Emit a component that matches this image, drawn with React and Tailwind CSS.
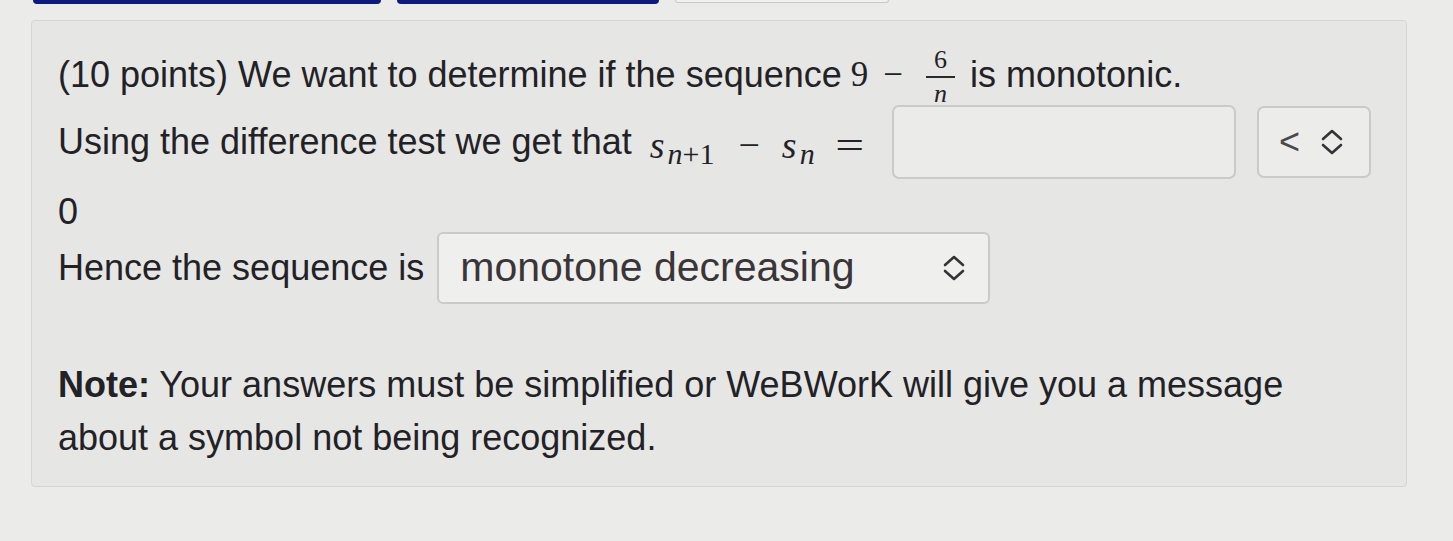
function UpDown({ className }) {
  return (
    <svg viewBox="0 0 24 28" className={className} fill="none" stroke="currentColor" strokeWidth="2.6" strokeLinecap="round" strokeLinejoin="round">
      <path d="M3 11 L12 3 L21 11" />
      <path d="M3 17 L12 25 L21 17" />
    </svg>
  );
}

function Frac({ top, bottom }) {
  return (
    <span className="inline-flex flex-col items-center leading-none text-[26px] translate-y-[2px]">
      <span className="px-[8px] pb-[3px]">{top}</span>
      <span className="h-[2px] w-full bg-[#2a2a2e]" />
      <span className="px-[8px] pt-[3px] italic">{bottom}</span>
    </span>
  );
}

const serif = "font-['Liberation_Serif','DejaVu_Serif',serif]";

export default function App() {
  return (
    <div className="relative w-[1453px] h-[541px] overflow-hidden bg-[#ebebe9] font-['Liberation_Sans',Arial,sans-serif] text-[#222226]">
      {/* tab buttons cut off at the top edge */}
      <div className="absolute top-0 left-[33px] flex gap-[16px]">
        <div className="w-[348px] h-[4px] rounded-b-[4px] bg-[#0c1a80]" />
        <div className="w-[262px] h-[4px] rounded-b-[4px] bg-[#0c1a80]" />
        <div className="w-[214px] h-[3px] rounded-b-[3px] border border-t-0 border-[#c9c9c7] bg-[#f0f0ee]" />
      </div>

      <div className="absolute left-[31px] top-[20px] w-[1376px] rounded-[4px] border border-[#d5d5d3] bg-[#e6e6e4] pl-[26px] pt-[29px] pb-[22px] text-[36px]">
        <div className="flex items-center h-[50px] whitespace-nowrap">
          <span>(10 points) We want to determine if the sequence</span>
          <span className={`${serif} ml-[9px] flex items-center text-[35px]`}>
            <span>9</span>
            <span className="ml-[15px] mr-[23px]">−</span>
            <Frac top="6" bottom="n" />
          </span>
          <span className="ml-[15px]">is monotonic.</span>
        </div>

        <div className="flex items-center h-[74px] mt-[5px] whitespace-nowrap">
          <span>Using the difference test we get that</span>
          <span className={`${serif} ml-[18px] flex items-baseline text-[38px] translate-y-[3px]`}>
            <span className="italic">s</span>
            <span className="text-[30px] translate-y-[6px] ml-[3px]">
              <span className="italic">n</span>+1
            </span>
            <span className="ml-[24px] mr-[22px]">−</span>
            <span className="italic">s</span>
            <span className="text-[30px] italic translate-y-[6px] ml-[3px]">n</span>
            <span className="ml-[24px] inline-block scale-x-[1.35]">=</span>
          </span>
          <div className="ml-[32px] w-[344px] h-[74px] rounded-[7px] border-2 border-[#cacac8] bg-[#ebebe9]" />
          <div className="ml-[21px] w-[114px] h-[72px] rounded-[7px] border-2 border-[#cacac8] bg-[#ececea] flex items-center pl-[20px] gap-[20px] text-[#4a4a4e]">
            <span className="text-[36px] font-light">&lt;</span>
            <UpDown className="w-[24px] h-[28px] text-[#333338]" />
          </div>
        </div>

        <div className="flex items-center h-[40px] mt-[13px]">0</div>

        <div className="flex items-center h-[72px] whitespace-nowrap">
          <span>Hence the sequence is</span>
          <div className="ml-[13px] w-[553px] h-[72px] rounded-[6px] border-2 border-[#cacac8] bg-[#efefed] flex items-center justify-between pl-[21px] pr-[22px] text-[#3a3538] text-[41px]">
            <span>monotone decreasing</span>
            <UpDown className="w-[24px] h-[28px] text-[#333338]" />
          </div>
        </div>

        <p className="mt-[54px] leading-[53px] pr-[60px]">
          <span className="font-bold">Note:</span> Your answers must be simplified or WeBWorK will give you a message
          <br />
          about a symbol not being recognized.
        </p>
      </div>
    </div>
  );
}
